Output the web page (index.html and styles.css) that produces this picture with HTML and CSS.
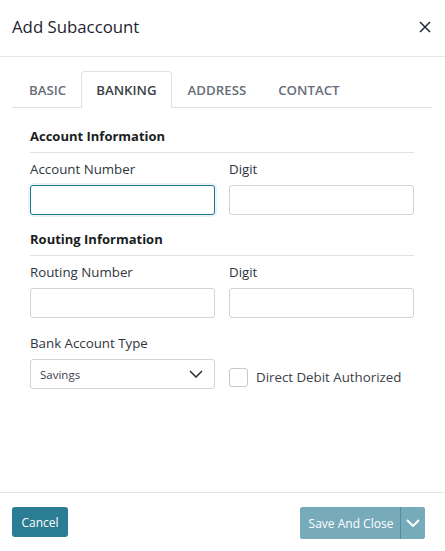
FILE: index.html
```html
<!DOCTYPE html>
<html lang="en">
<head>
<meta charset="utf-8">
<title>Add Subaccount</title>
<link rel="stylesheet" href="styles.css">
</head>
<body>
<div class="modal">
  <header class="modal-header">
    <h1 class="modal-title">Add Subaccount</h1>
    <button class="close" aria-label="Close">
      <svg width="12" height="12" viewBox="0 0 12 12"><path d="M1 1L11 11M11 1L1 11" stroke="#1f2a3a" stroke-width="1.5" fill="none"/></svg>
    </button>
  </header>
  <div class="modal-body">
    <nav class="tabs">
      <span class="tab">BASIC</span>
      <span class="tab active">BANKING</span>
      <span class="tab">ADDRESS</span>
      <span class="tab">CONTACT</span>
    </nav>
    <div class="pane">
      <h2 class="section">Account Information</h2>
      <div class="row">
        <div class="field">
          <label class="label">Account Number</label>
          <div class="input focus"></div>
        </div>
        <div class="field">
          <label class="label">Digit</label>
          <div class="input"></div>
        </div>
      </div>
      <h2 class="section">Routing Information</h2>
      <div class="row">
        <div class="field">
          <label class="label">Routing Number</label>
          <div class="input"></div>
        </div>
        <div class="field">
          <label class="label">Digit</label>
          <div class="input"></div>
        </div>
      </div>
      <div class="row row-last">
        <div class="field">
          <label class="label">Bank Account Type</label>
          <div class="input select">
            <span>Savings</span>
            <svg width="14" height="8" viewBox="0 0 14 8"><path d="M1 1L7 7L13 1" stroke="#333" stroke-width="1.6" fill="none"/></svg>
          </div>
        </div>
        <div class="field check-field">
          <span class="checkbox"></span>
          <span class="check-label">Direct Debit Authorized</span>
        </div>
      </div>
    </div>
  </div>
  <footer class="modal-footer">
    <button class="btn btn-cancel">Cancel</button>
    <div class="split">
      <button class="btn btn-save">Save And Close</button>
      <button class="btn btn-caret">
        <svg width="14" height="8" viewBox="0 0 14 8"><path d="M1 1L7 7L13 1" stroke="#fff" stroke-width="2" fill="none"/></svg>
      </button>
    </div>
  </footer>
</div>
</body>
</html>
```

FILE: styles.css
```css
* { box-sizing: border-box; }
html, body { margin: 0; padding: 0; background: #fff; }
body {
  font-family: "Open Sans", "Noto Sans", "Liberation Sans", sans-serif;
  color: #212529;
}
.modal {
  width: 445px;
  height: 551px;
  display: flex;
  flex-direction: column;
}
.modal-header {
  height: 57px;
  padding: 0 14px 0 12px;
  display: flex;
  align-items: center;
  justify-content: space-between;
  border-bottom: 1px solid #e6e6e6;
}
.modal-title {
  margin: 0;
  font-size: 16.8px;
  font-weight: 400;
  color: #1e2430;
  line-height: 24px;
  padding-bottom: 3px;
}
.close {
  border: 0;
  background: none;
  padding: 0;
  width: 12px;
  height: 12px;
  display: flex;
  margin-bottom: 3px;
}
.modal-body {
  flex: 1;
  padding: 14px 13px 0 12px;
}
.tabs {
  display: flex;
  height: 37px;
  border-bottom: 1px solid #dee2e6;
}
.tab {
  padding: 0 15px;
  line-height: 36px;
  font-size: 13.25px;
  font-weight: 600;
  color: #676d78;
  border: 1px solid transparent;
  border-bottom: 0;
  border-radius: 4px 4px 0 0;
}
.tab:first-child { padding-left: 16px; padding-right: 14px; }
.tab.active {
  color: #3a3f48;
  border-color: #dee2e6;
  background: #fff;
  margin-bottom: -1px;
  height: 37px;
  padding: 0 14px;
}
.pane {
  padding: 0 18px;
}
.section {
  margin: 18px 0 0;
  font-size: 13px;
  font-weight: 700;
  color: #1a1d22;
  line-height: 20px;
  padding-bottom: 6px;
  border-bottom: 1px solid #dee2e6;
}
.row {
  display: grid;
  grid-template-columns: 1fr 1fr;
  gap: 14px;
  margin-top: 6px;
}
.row + .section { margin-top: 14px; }
.row-last { margin-top: 15px; align-items: end; }
.field { display: flex; flex-direction: column; }
.label {
  font-size: 13.3px;
  line-height: 20px;
  color: #2f3640;
  margin-bottom: 6px;
}
.input {
  height: 30px;
  border: 1px solid #ced4da;
  border-radius: 3px;
  background: #fff;
}
.input.focus {
  border-color: #1d7590;
  box-shadow: 0 0 0 2px #e8f4f8;
}
.select {
  display: flex;
  align-items: center;
  justify-content: space-between;
  padding: 0 11px 0 9px;
  font-size: 11.5px;
  color: #3b424b;
}
.check-field {
  flex-direction: row;
  align-items: center;
  gap: 8px;
  height: 30px;
  padding-top: 6px;
}
.checkbox {
  width: 19px;
  height: 19px;
  border: 1px solid #c4c9cf;
  border-radius: 3px;
  flex: none;
}
.check-label {
  font-size: 13.3px;
  color: #3a3f48;
}
.modal-footer {
  height: 59px;
  border-top: 1px solid #e6e6e6;
  padding: 14px 20px 0 12px;
  display: flex;
  justify-content: space-between;
  align-items: flex-start;
}
.btn {
  border: 0;
  font-family: inherit;
  color: #fff;
  font-size: 12px;
  cursor: pointer;
}
.btn-cancel {
  background: #2b7d93;
  height: 30px;
  width: 56px;
  border-radius: 3px;
  padding: 0;
}
.split {
  display: flex;
  height: 32px;
  border-radius: 3px;
  overflow: hidden;
  background: #77abba;
}
.btn-save {
  background: #77abba;
  width: 101px;
  padding: 0 0 0 2px;
  border-right: 1px solid #4f8ea1;
}
.btn-caret {
  background: #77abba;
  width: 24px;
  padding: 0;
  display: flex;
  align-items: center;
  justify-content: center;
}
```
